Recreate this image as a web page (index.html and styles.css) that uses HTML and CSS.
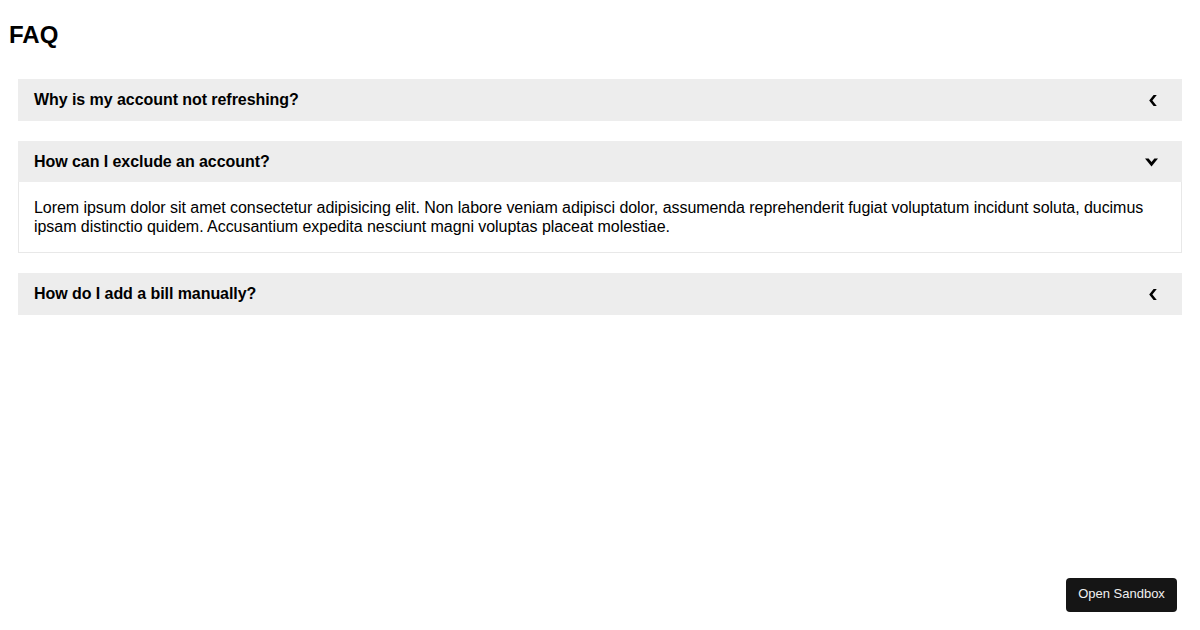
FILE: index.html
```html
<!DOCTYPE html>
<html>
<head>
<meta charset="utf-8">
<link rel="stylesheet" href="styles.css">
</head>
<body>
<h2 class="title">FAQ</h2>
<div class="faq">
  <div class="item">
    <div class="head"><span>Why is my account not refreshing?</span>
      <svg class="chev left" width="8" height="11" viewBox="0 0 8 11"><polygon points="4.6,0 7.8,0 3.4,5.5 7.8,11 4.6,11 0.2,5.5" fill="#000"/></svg>
    </div>
  </div>
  <div class="item open">
    <div class="head"><span>How can I exclude an account?</span>
      <svg class="chev down" width="13" height="9" viewBox="0 0 13 9"><polygon points="0,0.5 3.6,0.5 6.5,4 9.4,0.5 13,0.5 6.5,8.5" fill="#000"/></svg>
    </div>
    <div class="body">Lorem ipsum dolor sit amet consectetur adipisicing elit. Non labore veniam adipisci dolor, assumenda reprehenderit fugiat voluptatum incidunt soluta, ducimus ipsam distinctio quidem. Accusantium expedita nesciunt magni voluptas placeat molestiae.</div>
  </div>
  <div class="item">
    <div class="head"><span>How do I add a bill manually?</span>
      <svg class="chev left" width="8" height="11" viewBox="0 0 8 11"><polygon points="4.6,0 7.8,0 3.4,5.5 7.8,11 4.6,11 0.2,5.5" fill="#000"/></svg>
    </div>
  </div>
</div>
<button class="sandbox">Open Sandbox</button>
</body>
</html>
```

FILE: styles.css
```css
html, body {
  margin: 0;
  padding: 0;
  background: #fff;
}
body {
  padding: 8px;
  font-family: "Liberation Sans", Arial, sans-serif;
  color: #000;
}
.title {
  font-size: 24px;
  font-weight: bold;
  margin: 13px 0 0 1px;
  line-height: 27px;
}
.faq {
  margin: 31px 10px 0 10px;
  display: flex;
  flex-direction: column;
  gap: 20px;
}
.head {
  background: #ededed;
  height: 42px;
  display: flex;
  align-items: center;
  justify-content: space-between;
  padding: 0 24px 0 16px;
  font-size: 16px;
  font-weight: bold;
  letter-spacing: -0.06px;
}
.open .head {
  height: 41px;
}
.chev.left {
  margin-right: 1px;
}
.chev.down {
  margin-top: 1px;
}
.body {
  border: 1px solid #e8e8e8;
  border-top: none;
  padding: 16px 15px 16px 15px;
  font-size: 16px;
  line-height: 19px;
  letter-spacing: -0.05px;
}
.sandbox {
  position: fixed;
  right: 23px;
  bottom: 18px;
  width: 111px;
  height: 34px;
  background: #151515;
  color: #f0f0f0;
  border: none;
  border-radius: 4px;
  font-family: "Liberation Sans", Arial, sans-serif;
  font-size: 13px;
  padding: 0 0 3px 0;
}
```
